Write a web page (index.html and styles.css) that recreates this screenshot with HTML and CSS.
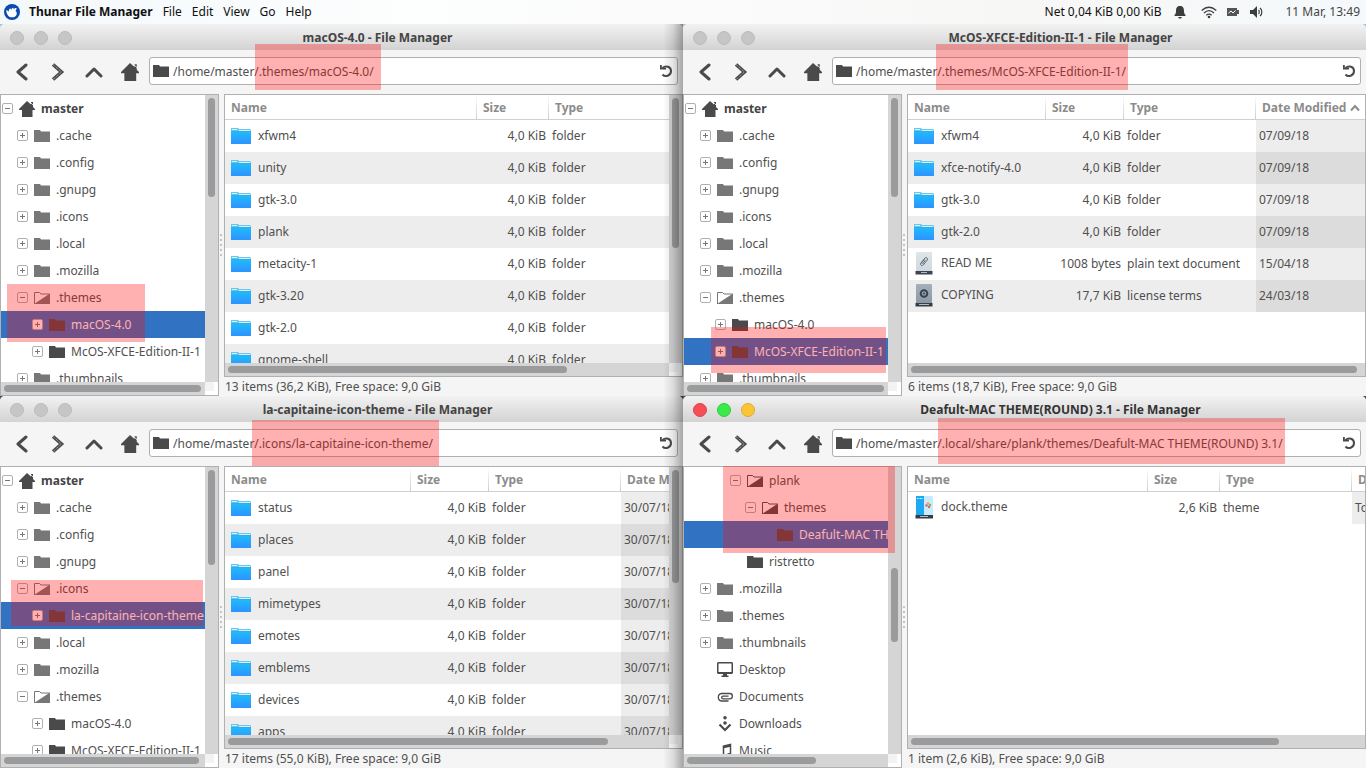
FILE: index.html
```html
<!DOCTYPE html>
<html lang="en">
<head>
<meta charset="utf-8">
<title>Thunar File Manager</title>
<link rel="stylesheet" href="styles.css">
</head>
<body>
<svg class="sprite" width="0" height="0" aria-hidden="true">
  <defs>
    <linearGradient id="blue" x1="0" y1="0" x2="0" y2="1"><stop offset="0" stop-color="#1fbcff"/><stop offset="1" stop-color="#2c93ff"/></linearGradient>
    <linearGradient id="paper" x1="0" y1="0" x2="0" y2="1"><stop offset="0" stop-color="#dfe6e8"/><stop offset="1" stop-color="#cdd6de"/></linearGradient>
    <linearGradient id="slate" x1="0" y1="0" x2="0" y2="1"><stop offset="0" stop-color="#a5b0ba"/><stop offset="1" stop-color="#8795a3"/></linearGradient>
  </defs>
  <symbol id="folder" viewBox="0 0 16 16"><path fill="currentColor" d="M0 2h6l1 1.500h9V14H0z"/></symbol>
  <symbol id="open" viewBox="0 0 16 16"><path fill="none" stroke="currentColor" d="M.5 14V2.500h5l1.500 1.500h8.500V14"/><path fill="currentColor" d="M0 14 16 3.500V14z"/></symbol>
  <symbol id="house" viewBox="0 0 16 16"><path fill="currentColor" d="M8 0 0 8v1h3v7h10.500V9H16V8l-2-2V1h-2v2.500z"/><path stroke="#f5f5f5" stroke-width=".8" d="m10.500 .5 4 4"/></symbol>
  <symbol id="dir" viewBox="0 0 20 16"><path fill="#62c9f5" d="M0 0h7l1 1h11l1 1v3H0z"/><path fill="#d4f1fc" d="M1 1h5v1H1zM8 2h11v1H8z"/><path fill="url(#blue)" d="M0 3h20v13H0z"/><path fill="#4f9fc4" opacity=".6" d="M0 3h20v1H0z"/></symbol>
  <symbol id="text" viewBox="0 0 18 24"><rect x="1" width="16" height="21" rx="1" fill="url(#paper)"/><path d="m5.500 11.500 4.500-5.500c1-1 3.500 0 2.300 2l-4 5c-1.500 1.500-3.500 0-2.300-1.500l3.500-4.300M7.500 12l3-4" fill="none" stroke="#56616a" stroke-width=".9"/><path fill="#3c4650" d="M.5 19h17v3.500h-17z"/><path stroke="#b5bcc1" d="M6 20.500h6"/></symbol>
  <symbol id="license" viewBox="0 0 18 24"><rect x="1" width="16" height="21" rx="1" fill="url(#slate)"/><circle cx="9" cy="9.500" r="3.300" fill="none" stroke="#37424d" stroke-width="2"/><circle cx="9" cy="9.500" r="1" fill="#37424d"/><path fill="#333e49" d="M.5 19h17v3.500h-17z"/><path stroke="#b5bcc1" d="M4 20.500h10"/></symbol>
  <symbol id="theme" viewBox="0 0 18 24"><rect x="1" width="17" height="21" rx="1" fill="#c9ebfb"/><path fill="#1eaaf0" d="M1 0h8v19H1z"/><path stroke="#e6f7ff" stroke-dasharray="1 .5" d="M2 2.500h6"/><circle cx="13" cy="7.500" r="1.300" fill="#f5a33b"/><circle cx="15" cy="9" r="1.200" fill="#5bc36b"/><circle cx="11.500" cy="9.500" r="1.200" fill="#e7508c"/><circle cx="14" cy="11" r="1.200" fill="#ef6150"/><path fill="#333e49" d="M.5 19H18v3.500H.5z"/><path stroke="#b5bcc1" d="M5 20.500h8"/></symbol>
  <symbol id="desktop" viewBox="0 0 16 16"><path fill="currentColor" fill-rule="evenodd" d="M1 0h14l1 1v10l-1 1h-5v1.500h1.500V15h-7v-1.500H6V12H1l-1-1V1zm.5 1.500v8.500h13V1.500z"/></symbol>
  <symbol id="clip" viewBox="0 0 16 16"><path fill="none" stroke="currentColor" stroke-width="1.300" d="M11.500 12H4.500a3.800 3.800 0 0 1 0-7.500h8.200a2.600 2.600 0 0 1 0 5.300H6a1.300 1.300 0 0 1 0-2.600h5.500"/></symbol>
  <symbol id="down" viewBox="0 0 16 16"><circle cx="8" cy="1.800" r="1.800" fill="currentColor"/><circle cx="8" cy="7" r="1.800" fill="currentColor"/><path fill="none" stroke="currentColor" stroke-width="2.200" d="M2.500 8.500 8 14l5.500-5.500"/></symbol>
  <symbol id="music" viewBox="0 0 16 16"><path fill="none" stroke="currentColor" stroke-width="1.500" d="M6.500 13V3l7-1.500V12M6.500 4.500l7-1.500"/><circle cx="5.500" cy="13" r="2" fill="currentColor"/><circle cx="12" cy="12" r="2" fill="currentColor"/></symbol>
  <symbol id="back" viewBox="0 0 18 18"><path fill="none" stroke="currentColor" stroke-width="3" stroke-linecap="round" stroke-linejoin="round" d="M13 2 5 9l8 7"/></symbol>
  <symbol id="fwd" viewBox="0 0 18 18"><path fill="none" stroke="currentColor" stroke-width="3.500" d="m4 1.500 8.500 7.500L4 16.500"/><path fill="none" stroke="#bbb" stroke-dasharray="1 1" d="m4 1.500 8.500 7.500L4 16.500"/></symbol>
  <symbol id="up" viewBox="0 0 18 18"><path fill="none" stroke="currentColor" stroke-width="3" stroke-linecap="round" stroke-linejoin="round" d="m2 13 7-7 7 7"/></symbol>
  <symbol id="reload" viewBox="0 0 14 14"><path fill="none" stroke="currentColor" stroke-width="2" d="M3.500 4C7 .8 12 3 12 7c0 5-6 6.500-8.500 3.500"/><path fill="currentColor" d="M1 1h1.800v2.700H7v1.800H1z"/></symbol>
  <symbol id="sort" viewBox="0 0 10 8"><path fill="none" stroke="currentColor" stroke-width="2" d="m1 6.500 4-4.500 4 4.500"/></symbol>
</svg>

<header class="panel">
  <svg class="logo" viewBox="0 0 16 16" aria-label="Applications"><circle cx="8" cy="8" r="8" fill="#0a4bb0"/><path fill="#fff" d="M2.500 6c1 0 1.500 1 2 2 .3-2 1-3.500 1.700-3.500S7 5.500 7 6.300C7.500 4.500 8.500 3.500 9.200 3.700s.3 1.300.1 2.100C10.500 4 12 3.500 12.500 4.300s-.8 2-1 2.700c1.800 1 1.800 4-.3 5.500-2.200 1.500-6 1-7.200-1S2 8 2.500 6z"/></svg>
  <nav class="menu">
    <button class="app">Thunar File Manager</button><button>File</button><button>Edit</button><button>View</button><button>Go</button><button>Help</button>
  </nav>
  <div class="tray">
    <span class="net">Net 0,04 KiB 0,00 KiB</span>
    <svg viewBox="0 0 16 16"><path fill="#3c3c3c" d="M8 2c3 0 4 2 4 5 0 2 .5 3 1.500 4v1h-11v-1C3.500 10 4 9 4 7c0-3 1-5 4-5zM6 13h4l-1 1.500H7z"/></svg>
    <svg viewBox="0 0 16 16"><g fill="none" stroke="#3c3c3c" stroke-width="1.300"><path d="M.7 6.500c4.500-4 10-4 14.600 0M3 9c3.200-3 6.800-3 10 0M5.300 11.300c1.800-1.600 3.600-1.600 5.400 0"/></g><circle cx="8" cy="13" r="1.300" fill="#3c3c3c"/></svg>
    <svg viewBox="0 0 16 16"><path fill="#555" d="M2 4h10v8H2zM12 6h2v4h-2z"/><path fill="none" stroke="#fff" stroke-width="1" d="M3.500 9 6 7l2 2 2.500-2.500"/></svg>
    <svg viewBox="0 0 16 16"><path fill="#3c3c3c" d="M1 6h3l4-4v12l-4-4H1z"/><path fill="none" stroke="#3c3c3c" stroke-width="1.200" d="M9.500 6c1 1 1 3 0 4M11 4c2.500 2 2.500 6 0 8"/></svg>
    <time class="clock">11 Mar, 13:49</time>
  </div>
</header>

<main class="desk">

<section class="win">
  <div class="title"><div class="dots"><button aria-label="Close"></button><button aria-label="Minimize"></button><button aria-label="Maximize"></button></div><h2>macOS-4.0 - File Manager</h2></div>
  <div class="tools">
    <button aria-label="Back"><svg><use href="#back"/></svg></button><button aria-label="Forward"><svg><use href="#fwd"/></svg></button><button aria-label="Up"><svg><use href="#up"/></svg></button><button aria-label="Home"><svg><use href="#house"/></svg></button>
    <label class="path"><svg><use href="#folder"/></svg><input type="text" aria-label="Location" value="/home/master/.themes/macOS-4.0/"><button aria-label="Reload"><svg><use href="#reload"/></svg></button></label>
  </div>
  <div class="body">
    <aside class="side">
      <ul class="tree">
        <li class="l0"><button class="minus" aria-label="Collapse"></button><svg><use href="#house"/></svg>master</li>
        <li class="l1"><button aria-label="Expand"></button><svg><use href="#folder"/></svg>.cache</li>
        <li class="l1"><button aria-label="Expand"></button><svg><use href="#folder"/></svg>.config</li>
        <li class="l1"><button aria-label="Expand"></button><svg><use href="#folder"/></svg>.gnupg</li>
        <li class="l1"><button aria-label="Expand"></button><svg><use href="#folder"/></svg>.icons</li>
        <li class="l1"><button aria-label="Expand"></button><svg><use href="#folder"/></svg>.local</li>
        <li class="l1"><button aria-label="Expand"></button><svg><use href="#folder"/></svg>.mozilla</li>
        <li class="l1"><button class="minus" aria-label="Collapse"></button><svg><use href="#open"/></svg>.themes</li>
        <li class="l2 sel"><button aria-label="Expand"></button><svg><use href="#folder"/></svg>macOS-4.0</li>
        <li class="l2"><button aria-label="Expand"></button><svg><use href="#folder"/></svg>McOS-XFCE-Edition-II-1</li>
        <li class="l1"><button aria-label="Expand"></button><svg><use href="#folder"/></svg>.thumbnails</li>
      </ul>
      <div class="vbar"><i style="margin-top:3px;height:99px"></i></div>
      <div class="hbar"><i style="width:197px"></i></div><div class="corner"></div>
    </aside>
    <div class="split"><i></i><i></i><i></i><i></i><i></i></div>
    <div class="pane">
      <div class="files">
        <div class="list">
        <table>
          <colgroup><col><col class="c72"><col class="c120"></colgroup>
          <thead><tr><th>Name</th><th>Size</th><th>Type</th></tr></thead>
          <tbody>
            <tr><td><svg><use href="#dir"/></svg>xfwm4</td><td>4,0 KiB</td><td>folder</td></tr>
            <tr><td><svg><use href="#dir"/></svg>unity</td><td>4,0 KiB</td><td>folder</td></tr>
            <tr><td><svg><use href="#dir"/></svg>gtk-3.0</td><td>4,0 KiB</td><td>folder</td></tr>
            <tr><td><svg><use href="#dir"/></svg>plank</td><td>4,0 KiB</td><td>folder</td></tr>
            <tr><td><svg><use href="#dir"/></svg>metacity-1</td><td>4,0 KiB</td><td>folder</td></tr>
            <tr><td><svg><use href="#dir"/></svg>gtk-3.20</td><td>4,0 KiB</td><td>folder</td></tr>
            <tr><td><svg><use href="#dir"/></svg>gtk-2.0</td><td>4,0 KiB</td><td>folder</td></tr>
            <tr><td><svg><use href="#dir"/></svg>gnome-shell</td><td>4,0 KiB</td><td>folder</td></tr>
          </tbody>
        </table>
        </div>
        <div class="vbar"><i style="margin-top:3px;height:150px"></i></div>
        <div class="hbar"><i style="width:339px"></i></div><div class="corner"></div>
      </div>
      <p class="status">13 items (36,2 KiB), Free space: 9,0 GiB</p>
    </div>
  </div>
  <div class="mark" style="left:255px;top:20px;width:126px;height:46px"></div>
  <div class="mark" style="left:7px;top:260px;width:138px;height:58px"></div>
</section>

<section class="win right">
  <div class="title"><div class="dots"><button aria-label="Close"></button><button aria-label="Minimize"></button><button aria-label="Maximize"></button></div><h2>McOS-XFCE-Edition-II-1 - File Manager</h2></div>
  <div class="tools">
    <button aria-label="Back"><svg><use href="#back"/></svg></button><button aria-label="Forward"><svg><use href="#fwd"/></svg></button><button aria-label="Up"><svg><use href="#up"/></svg></button><button aria-label="Home"><svg><use href="#house"/></svg></button>
    <label class="path"><svg><use href="#folder"/></svg><input type="text" aria-label="Location" value="/home/master/.themes/McOS-XFCE-Edition-II-1/"><button aria-label="Reload"><svg><use href="#reload"/></svg></button></label>
  </div>
  <div class="body">
    <aside class="side">
      <ul class="tree">
        <li class="l0"><button class="minus" aria-label="Collapse"></button><svg><use href="#house"/></svg>master</li>
        <li class="l1"><button aria-label="Expand"></button><svg><use href="#folder"/></svg>.cache</li>
        <li class="l1"><button aria-label="Expand"></button><svg><use href="#folder"/></svg>.config</li>
        <li class="l1"><button aria-label="Expand"></button><svg><use href="#folder"/></svg>.gnupg</li>
        <li class="l1"><button aria-label="Expand"></button><svg><use href="#folder"/></svg>.icons</li>
        <li class="l1"><button aria-label="Expand"></button><svg><use href="#folder"/></svg>.local</li>
        <li class="l1"><button aria-label="Expand"></button><svg><use href="#folder"/></svg>.mozilla</li>
        <li class="l1"><button class="minus" aria-label="Collapse"></button><svg><use href="#open"/></svg>.themes</li>
        <li class="l2"><button aria-label="Expand"></button><svg><use href="#folder"/></svg>macOS-4.0</li>
        <li class="l2 sel"><button aria-label="Expand"></button><svg><use href="#folder"/></svg>McOS-XFCE-Edition-II-1</li>
        <li class="l1"><button aria-label="Expand"></button><svg><use href="#folder"/></svg>.thumbnails</li>
      </ul>
      <div class="vbar"><i style="margin-top:3px;height:99px"></i></div>
      <div class="hbar"><i style="width:197px"></i></div><div class="corner"></div>
    </aside>
    <div class="split"><i></i><i></i><i></i><i></i><i></i></div>
    <div class="pane">
      <div class="files wide">
        <div class="list">
        <table class="dated">
          <colgroup><col><col class="c78"><col class="c132"><col class="c109"></colgroup>
          <thead><tr><th>Name</th><th>Size</th><th>Type</th><th>Date Modified <svg class="sort"><use href="#sort"/></svg></th></tr></thead>
          <tbody>
            <tr><td><svg><use href="#dir"/></svg>xfwm4</td><td>4,0 KiB</td><td>folder</td><td>07/09/18</td></tr>
            <tr><td><svg><use href="#dir"/></svg>xfce-notify-4.0</td><td>4,0 KiB</td><td>folder</td><td>07/09/18</td></tr>
            <tr><td><svg><use href="#dir"/></svg>gtk-3.0</td><td>4,0 KiB</td><td>folder</td><td>07/09/18</td></tr>
            <tr><td><svg><use href="#dir"/></svg>gtk-2.0</td><td>4,0 KiB</td><td>folder</td><td>07/09/18</td></tr>
            <tr><td><svg class="doc"><use href="#text"/></svg>READ ME</td><td>1008 bytes</td><td>plain text document</td><td>15/04/18</td></tr>
            <tr><td><svg class="doc"><use href="#license"/></svg>COPYING</td><td>17,7 KiB</td><td>license terms</td><td>24/03/18</td></tr>
          </tbody>
        </table>
        </div>
        <div class="hbar"><i style="width:446px"></i></div>
      </div>
      <p class="status">6 items (18,7 KiB), Free space: 9,0 GiB</p>
    </div>
  </div>
  <div class="mark" style="left:253px;top:20px;width:192px;height:46px"></div>
  <div class="mark" style="left:28px;top:303px;width:175px;height:46px"></div>
</section>

<section class="win low">
  <div class="title"><div class="dots"><button aria-label="Close"></button><button aria-label="Minimize"></button><button aria-label="Maximize"></button></div><h2>la-capitaine-icon-theme - File Manager</h2></div>
  <div class="tools">
    <button aria-label="Back"><svg><use href="#back"/></svg></button><button aria-label="Forward"><svg><use href="#fwd"/></svg></button><button aria-label="Up"><svg><use href="#up"/></svg></button><button aria-label="Home"><svg><use href="#house"/></svg></button>
    <label class="path"><svg><use href="#folder"/></svg><input type="text" aria-label="Location" value="/home/master/.icons/la-capitaine-icon-theme/"><button aria-label="Reload"><svg><use href="#reload"/></svg></button></label>
  </div>
  <div class="body">
    <aside class="side">
      <ul class="tree">
        <li class="l0"><button class="minus" aria-label="Collapse"></button><svg><use href="#house"/></svg>master</li>
        <li class="l1"><button aria-label="Expand"></button><svg><use href="#folder"/></svg>.cache</li>
        <li class="l1"><button aria-label="Expand"></button><svg><use href="#folder"/></svg>.config</li>
        <li class="l1"><button aria-label="Expand"></button><svg><use href="#folder"/></svg>.gnupg</li>
        <li class="l1"><button class="minus" aria-label="Collapse"></button><svg><use href="#open"/></svg>.icons</li>
        <li class="l2 sel"><button aria-label="Expand"></button><svg><use href="#folder"/></svg>la-capitaine-icon-theme</li>
        <li class="l1"><button aria-label="Expand"></button><svg><use href="#folder"/></svg>.local</li>
        <li class="l1"><button aria-label="Expand"></button><svg><use href="#folder"/></svg>.mozilla</li>
        <li class="l1"><button class="minus" aria-label="Collapse"></button><svg><use href="#open"/></svg>.themes</li>
        <li class="l2"><button aria-label="Expand"></button><svg><use href="#folder"/></svg>macOS-4.0</li>
        <li class="l2"><button aria-label="Expand"></button><svg><use href="#folder"/></svg>McOS-XFCE-Edition-II-1</li>
      </ul>
      <div class="vbar"><i style="margin-top:3px;height:95px"></i></div>
      <div class="hbar"><i style="width:195px"></i></div><div class="corner"></div>
    </aside>
    <div class="split"><i></i><i></i><i></i><i></i><i></i></div>
    <div class="pane">
      <div class="files">
        <div class="list">
        <table class="dated">
          <colgroup><col class="c186"><col class="c78"><col class="c132"><col class="c109"></colgroup>
          <thead><tr><th>Name</th><th>Size</th><th>Type</th><th>Date Modified</th></tr></thead>
          <tbody>
            <tr><td><svg><use href="#dir"/></svg>status</td><td>4,0 KiB</td><td>folder</td><td>30/07/18</td></tr>
            <tr><td><svg><use href="#dir"/></svg>places</td><td>4,0 KiB</td><td>folder</td><td>30/07/18</td></tr>
            <tr><td><svg><use href="#dir"/></svg>panel</td><td>4,0 KiB</td><td>folder</td><td>30/07/18</td></tr>
            <tr><td><svg><use href="#dir"/></svg>mimetypes</td><td>4,0 KiB</td><td>folder</td><td>30/07/18</td></tr>
            <tr><td><svg><use href="#dir"/></svg>emotes</td><td>4,0 KiB</td><td>folder</td><td>30/07/18</td></tr>
            <tr><td><svg><use href="#dir"/></svg>emblems</td><td>4,0 KiB</td><td>folder</td><td>30/07/18</td></tr>
            <tr><td><svg><use href="#dir"/></svg>devices</td><td>4,0 KiB</td><td>folder</td><td>30/07/18</td></tr>
            <tr><td><svg><use href="#dir"/></svg>apps</td><td>4,0 KiB</td><td>folder</td><td>30/07/18</td></tr>
          </tbody>
        </table>
        </div>
        <div class="vbar"><i style="margin-top:3px;height:113px"></i></div>
        <div class="hbar"><i style="width:380px"></i></div><div class="corner"></div>
      </div>
      <p class="status">17 items (55,0 KiB), Free space: 9,0 GiB</p>
    </div>
  </div>
  <div class="mark" style="left:252px;top:24px;width:187px;height:46px"></div>
  <div class="mark" style="left:11px;top:184px;width:192px;height:46px"></div>
</section>

<section class="win right low active">
  <div class="title"><div class="dots"><button aria-label="Close"></button><button aria-label="Minimize"></button><button aria-label="Maximize"></button></div><h2>Deafult-MAC THEME(ROUND) 3.1 - File Manager</h2></div>
  <div class="tools">
    <button aria-label="Back"><svg><use href="#back"/></svg></button><button aria-label="Forward"><svg><use href="#fwd"/></svg></button><button aria-label="Up"><svg><use href="#up"/></svg></button><button aria-label="Home"><svg><use href="#house"/></svg></button>
    <label class="path"><svg><use href="#folder"/></svg><input type="text" aria-label="Location" value="/home/master/.local/share/plank/themes/Deafult-MAC THEME(ROUND) 3.1/"><button aria-label="Reload"><svg><use href="#reload"/></svg></button></label>
  </div>
  <div class="body">
    <aside class="side">
      <ul class="tree">
        <li class="l3"><button class="minus" aria-label="Collapse"></button><svg><use href="#open"/></svg>plank</li>
        <li class="l4"><button class="minus" aria-label="Collapse"></button><svg><use href="#open"/></svg>themes</li>
        <li class="l5 sel leaf"><svg><use href="#folder"/></svg>Deafult-MAC THEME(ROUND) 3.1</li>
        <li class="l3 leaf"><svg><use href="#folder"/></svg>ristretto</li>
        <li class="l1"><button aria-label="Expand"></button><svg><use href="#folder"/></svg>.mozilla</li>
        <li class="l1"><button aria-label="Expand"></button><svg><use href="#folder"/></svg>.themes</li>
        <li class="l1"><button aria-label="Expand"></button><svg><use href="#folder"/></svg>.thumbnails</li>
        <li class="l1 leaf place"><svg><use href="#desktop"/></svg>Desktop</li>
        <li class="l1 leaf place"><svg><use href="#clip"/></svg>Documents</li>
        <li class="l1 leaf place"><svg><use href="#down"/></svg>Downloads</li>
        <li class="l1 leaf place"><svg><use href="#music"/></svg>Music</li>
      </ul>
      <div class="vbar"><i style="margin-top:101px;height:74px"></i></div>
      <div class="hbar"><i style="width:129px"></i></div><div class="corner"></div>
    </aside>
    <div class="split"><i></i><i></i><i></i><i></i><i></i></div>
    <div class="pane">
      <div class="files wide">
        <div class="list">
        <table class="dated">
          <colgroup><col class="c240"><col class="c72"><col class="c132"><col class="c109"></colgroup>
          <thead><tr><th>Name</th><th>Size</th><th>Type</th><th>Date Modified</th></tr></thead>
          <tbody>
            <tr><td><svg class="doc"><use href="#theme"/></svg>dock.theme</td><td>2,6 KiB</td><td>theme</td><td>Today</td></tr>
          </tbody>
        </table>
        </div>
        <div class="hbar"><i style="width:368px"></i></div>
      </div>
      <p class="status">1 item (2,6 KiB), Free space: 9,0 GiB</p>
    </div>
  </div>
  <div class="mark" style="left:255px;top:22px;width:347px;height:46px"></div>
  <div class="mark" style="left:40px;top:70px;width:172px;height:87px"></div>
</section>
</main>
</body>
</html>
```
FILE: styles.css
```css
* { box-sizing: border-box; }
body {
  margin: 0;
  height: 100vh;
  display: flex;
  flex-direction: column;
  overflow: hidden;
  background: #a9c3d6;
  color: #505050;
  font: 12px/16px "Noto Sans", "Open Sans", sans-serif;
}
button { margin: 0; padding: 0; border: 0; background: none; color: inherit; font: inherit; }
.sprite { position: absolute; }
svg { display: block; flex: none; }

/* top panel */
.panel {
  height: 24px;
  flex: none;
  display: flex;
  align-items: center;
  padding: 0 6px 0 4px;
  background: linear-gradient(90deg, #f3f8fb, #fdfefe 30%, #f7f7f6 75%, #f5f9fb);
  color: #101010;
}
.logo { width: 16px; height: 16px; margin-right: 9px; }
.menu { display: flex; gap: 10px; }
.app { font-weight: bold; }
.tray { display: flex; align-items: center; gap: 8px; margin-left: auto; }
.tray svg { width: 16px; height: 16px; }
.net { margin-right: 3px; }
.net + svg { margin-right: 5px; }
.clock { margin-left: 12px; color: #444; }

/* windows */
.desk { flex: 1; min-height: 0; display: grid; grid-template: minmax(0, 1fr) minmax(0, 1fr) / minmax(0, 1fr) minmax(0, 1fr); }
.win { position: relative; display: flex; flex-direction: column; min-width: 0; min-height: 0; background: #f5f5f5; border-radius: 5px 5px 0 0; }
.low::after { content: ""; position: absolute; z-index: -1; inset: 0 0 auto; height: 6px; background: #41505a; }
.right::before {
  content: "";
  position: absolute;
  top: 0;
  bottom: 0;
  right: 100%;
  width: 20px;
  background: linear-gradient(270deg, rgba(0,0,0,.32), rgba(0,0,0,.1) 50%, rgba(0,0,0,0));
  pointer-events: none;
}
.title {
  height: 26px;
  flex: none;
  display: flex;
  align-items: center;
  padding: 2px 0 0 10px;
  background: linear-gradient(#f2f2f2, #d3d3d3);
  border-radius: 5px 5px 0 0;
}
.dots { display: flex; gap: 10px; width: 62px; }
.dots button { width: 14px; height: 14px; border-radius: 50%; background: #c6c6c6; border: 1px solid #bcbcbc; }
.active .dots button:nth-child(1) { background: #f54e56; border-color: #dd434b; }
.active .dots button:nth-child(2) { background: #3aea49; border-color: #2fcb3d; }
.active .dots button:nth-child(3) { background: #fbc536; border-color: #dfab28; }
h2 { flex: 1; margin: 0; text-align: center; font-size: 12px; line-height: 16px; color: #444; }
.active h2 { color: #333; }

.tools { display: flex; flex: none; height: 44px; padding: 7px 5px 9px 4px; color: #4a4a4a; }
.tools > button { width: 36px; display: flex; align-items: center; justify-content: center; padding-top: 2px; }
.tools > button svg { width: 18px; height: 18px; }
.path {
  flex: 1;
  min-width: 0;
  display: flex;
  align-items: center;
  gap: 4px;
  margin-left: 1px;
  padding: 0 4px 0 3px;
  border: 1px solid #b0b0b0;
  border-radius: 3px;
  background: #fff;
}
.path > svg { width: 16px; height: 16px; }
.path input { flex: 1; min-width: 0; border: 0; padding: 2px 0 0; background: none; color: #505050; font: inherit; outline: 0; }
.path button svg { width: 14px; height: 14px; }

.body { flex: 1; min-height: 0; display: flex; }
.side, .files {
  display: grid;
  grid-template: minmax(0, 1fr) 13px / minmax(0, 1fr) 13px;
  min-height: 0;
  background: #fff;
  border: 1px solid #b0b0b0;
}
.side { width: 219px; flex: none; }
.files { flex: 1; }
.files.wide { grid-template-columns: minmax(0, 1fr); }
.vbar, .hbar { display: flex; background: #d5d5d5; padding: 3px; }
.vbar { padding-top: 0; }
.vbar i { width: 7px; border-radius: 4px; background: #9a9b9c; }
.hbar i { height: 7px; border-radius: 4px; background: #9a9b9c; max-width: 100%; }
.corner { background: linear-gradient(#f3f3f3, #f3f3f3) 0 0 / 9px 9px no-repeat #fff; }

.tree { margin: 0; padding: 0; list-style: none; overflow: hidden; }
.tree li { display: flex; align-items: center; height: 27px; gap: 6px; white-space: nowrap; color: #505050; }
.tree li svg { width: 16px; height: 16px; color: #4a4a4a; }
.tree .l0 { padding-left: 1px; font-weight: bold; color: #444; }
.tree .l1 { padding-left: 16px; }
.tree .l1 svg { color: #777; }
.tree .place svg { color: #4a4a4a; }
.tree .l2 { padding-left: 31px; }
.tree .l3 { padding-left: 46px; }
.tree .l4 { padding-left: 61px; }
.tree .l5 { padding-left: 76px; }
.tree .leaf::before { content: ""; width: 11px; flex: none; }
.tree .sel { background: #3173c2; color: #fff; }
.tree button {
  width: 11px;
  height: 11px;
  flex: none;
  border: 1px solid #b0b0b0;
  border-radius: 2px;
  background: linear-gradient(#777, #777) center / 5px 1px no-repeat, linear-gradient(#777, #777) center / 1px 5px no-repeat, #fff;
}
.tree .minus { background: linear-gradient(#777, #777) center / 5px 1px no-repeat, #fff; }

.split { width: 5px; flex: none; display: flex; flex-direction: column; align-items: flex-start; justify-content: center; gap: 3px; padding-left: 1px; }
.split i { width: 2px; height: 2px; background: #c4c4c4; }

.pane { flex: 1; min-width: 0; display: flex; flex-direction: column; }
.list { overflow: hidden; }
table { width: 100%; table-layout: fixed; border-collapse: separate; border-spacing: 0; }
.c72 { width: 72px; }
.c78 { width: 78px; }
.c109 { width: 109px; }
.c120 { width: 120px; }
.c132 { width: 132px; }
.c186 { width: 186px; }
.c240 { width: 240px; }
th {
  height: 25px;
  padding: 2px 6px 0;
  text-align: left;
  white-space: nowrap;
  color: #8c8c8c;
  border-bottom: 1px solid #cfcfcf;
  background: linear-gradient(#fff, #ccc) right / 1px 100% no-repeat;
}
th:last-child { background: none; }
.sort { display: inline-block; width: 10px; height: 8px; }
td { height: 32px; padding: 0 3px; white-space: nowrap; }
td:first-child { padding-left: 6px; }
td:nth-child(2) { text-align: right; }
tr:nth-child(even) td { background: #ededed; }
.dated td:nth-child(4) { background: #ededed; }
.dated tr:nth-child(even) td:nth-child(4) { background: #dcdcdc; }
td svg { display: inline-block; vertical-align: middle; width: 20px; height: 16px; margin-right: 7px; }
td .doc { height: 24px; margin-bottom: 2px; margin-top: 2px; }
.status { margin: 0; height: 19px; flex: none; line-height: 20px; white-space: nowrap; padding-left: 1px; }

/* highlights laid over the windows */
.mark { position: absolute; background: rgba(255, 10, 10, .32); pointer-events: none; }
```
